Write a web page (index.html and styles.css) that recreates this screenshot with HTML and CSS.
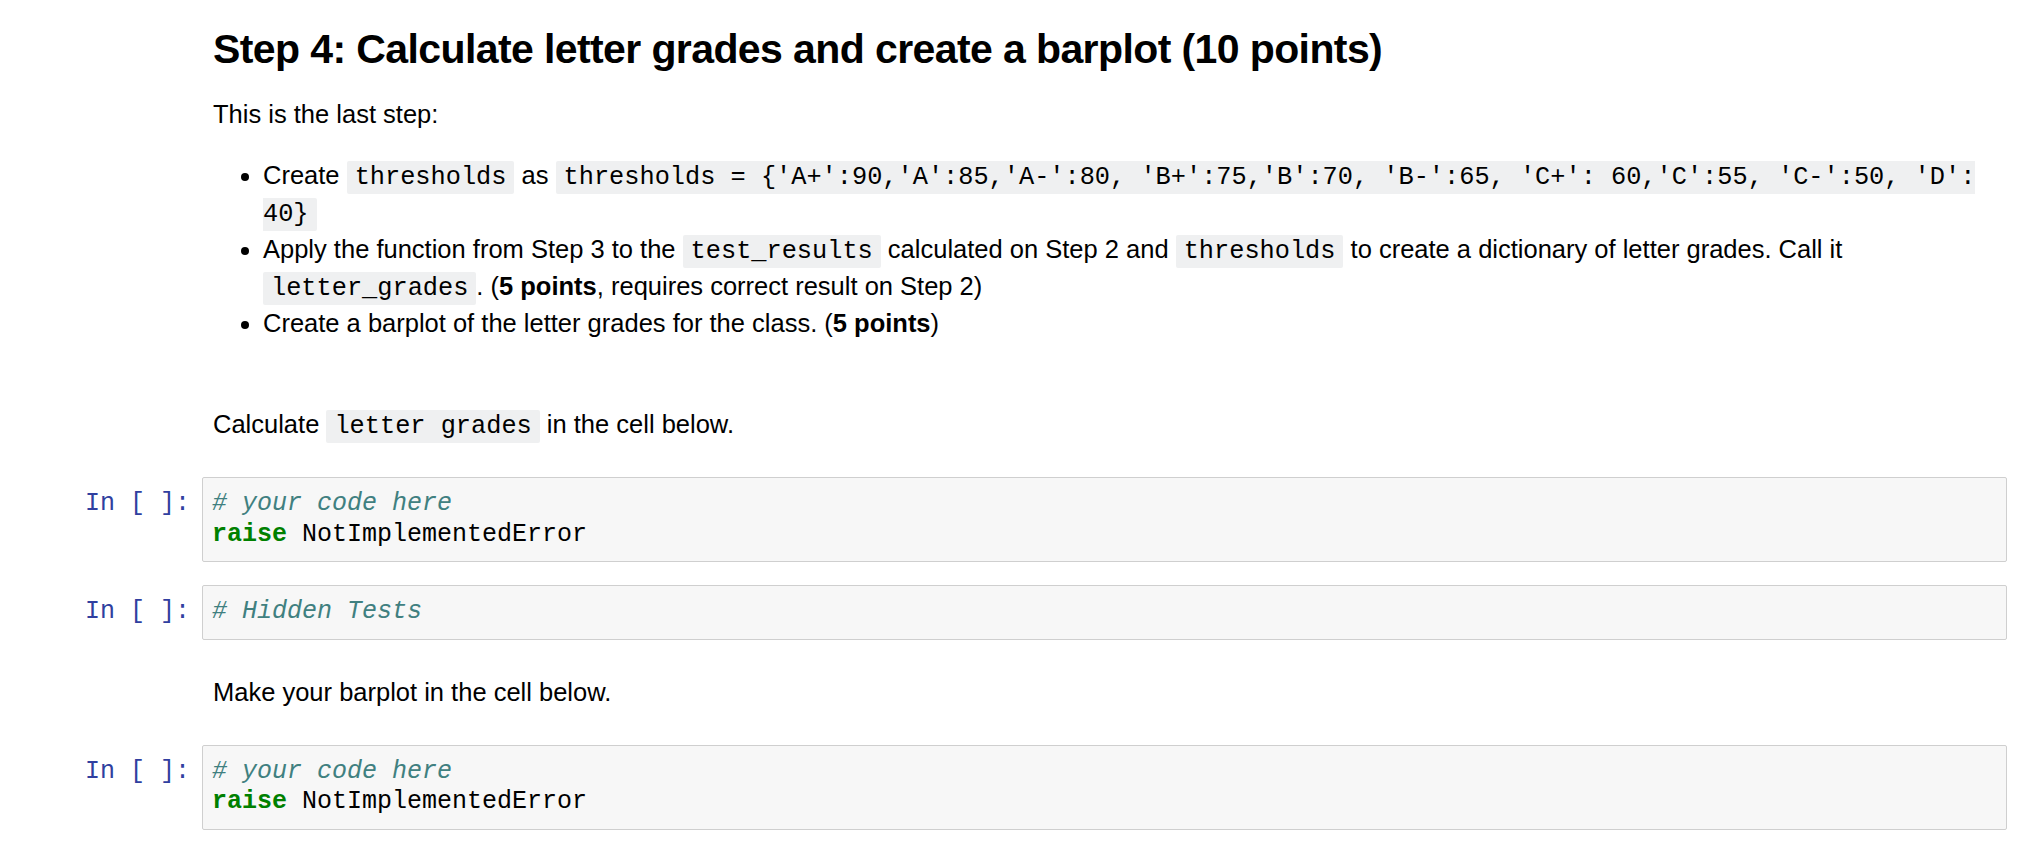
FILE: index.html
```html
<!DOCTYPE html>
<html lang="en">
<head>
<meta charset="utf-8">
<title>Step 4</title>
<link rel="stylesheet" href="styles.css">
</head>
<body>
<div class="notebook">
  <div class="cell text-cell">
    <div class="prompt"></div>
    <div class="text">
      <h2 class="heading">Step 4: Calculate letter grades and create a barplot (10 points)</h2>
      <p class="para">This is the last step:</p>
      <ul class="list">
        <li>Create <code class="ic">thresholds</code> as <code class="ic">thresholds = {'A+':90,'A':85,'A-':80, 'B+':75,'B':70, 'B-':65, 'C+': 60,'C':55, 'C-':50, 'D':<br>40}</code></li>
        <li>Apply the function from Step 3 to the <code class="ic">test_results</code> calculated on Step 2 and <code class="ic">thresholds</code> to create a dictionary of letter grades. Call it<br><code class="ic">letter_grades</code>. (<b>5 points</b>, requires correct result on Step 2)</li>
        <li>Create a barplot of the letter grades for the class. (<b>5 points</b>)</li>
      </ul>
    </div>
  </div>
  <div class="cell text-cell">
    <div class="prompt"></div>
    <div class="text">
      <p class="para">Calculate <code class="ic">letter grades</code> in the cell below.</p>
    </div>
  </div>
  <div class="cell code-cell">
    <div class="prompt">In [ ]:</div>
    <div class="input"><pre class="src"><span class="cm"># your code here</span>
<span class="kw">raise</span> NotImplementedError</pre></div>
  </div>
  <div class="cell code-cell">
    <div class="prompt">In [ ]:</div>
    <div class="input"><pre class="src"><span class="cm"># Hidden Tests</span></pre></div>
  </div>
  <div class="cell text-cell">
    <div class="prompt"></div>
    <div class="text">
      <p class="para">Make your barplot in the cell below.</p>
    </div>
  </div>
  <div class="cell code-cell">
    <div class="prompt">In [ ]:</div>
    <div class="input"><pre class="src"><span class="cm"># your code here</span>
<span class="kw">raise</span> NotImplementedError</pre></div>
  </div>
</div>
</body>
</html>
```

FILE: styles.css
```css
html, body {
  margin: 0;
  padding: 0;
  background: #ffffff;
}

body {
  font-family: "Liberation Sans", Arial, Helvetica, sans-serif;
  font-size: 25.5px;
  color: #000000;
}

.notebook {
  display: flex;
  flex-direction: column;
  gap: 23px;
  padding-right: 27px;
}

.cell {
  display: flex;
  align-items: flex-start;
}

.prompt {
  flex: 0 0 202px;
  box-sizing: border-box;
  text-align: right;
  padding-right: 12px;
  font-family: "Liberation Mono", "Courier New", monospace;
  font-size: 25px;
  line-height: 30.5px;
  color: #303f9f;
  white-space: pre;
}

.code-cell .prompt {
  padding-top: 12px;
}

.text-cell {
  padding: 11px 0;
}

.text {
  flex: 1;
  min-width: 0;
  padding: 0 9px 0 11px;
  line-height: 37px;
}

.heading {
  font-size: 41px;
  line-height: 1;
  font-weight: bold;
  letter-spacing: -0.6px;
  margin: 18px 0 0;
}

.para {
  margin: 26px 0 0;
}

.text-cell + .text-cell .para,
.code-cell + .text-cell .para {
  margin-top: 0;
}

.list {
  margin: 24px 0 19px;
  padding-left: 50px;
}

.ic {
  font-family: "Liberation Mono", "Courier New", monospace;
  font-size: 25.3px;
  line-height: 1;
  background: #eff0f1;
  padding: 2px 8px;
  border-radius: 2px;
}

.input {
  flex: 1;
  min-width: 0;
  background: #f7f7f7;
  border: 1px solid #cfcfcf;
  border-radius: 2px;
  padding: 11px 9px;
}

.src {
  margin: 0;
  font-family: "Liberation Mono", "Courier New", monospace;
  font-size: 25px;
  line-height: 30.5px;
  color: #000000;
}

.cm {
  color: #408080;
  font-style: italic;
}

.kw {
  color: #008000;
  font-weight: bold;
}
```
